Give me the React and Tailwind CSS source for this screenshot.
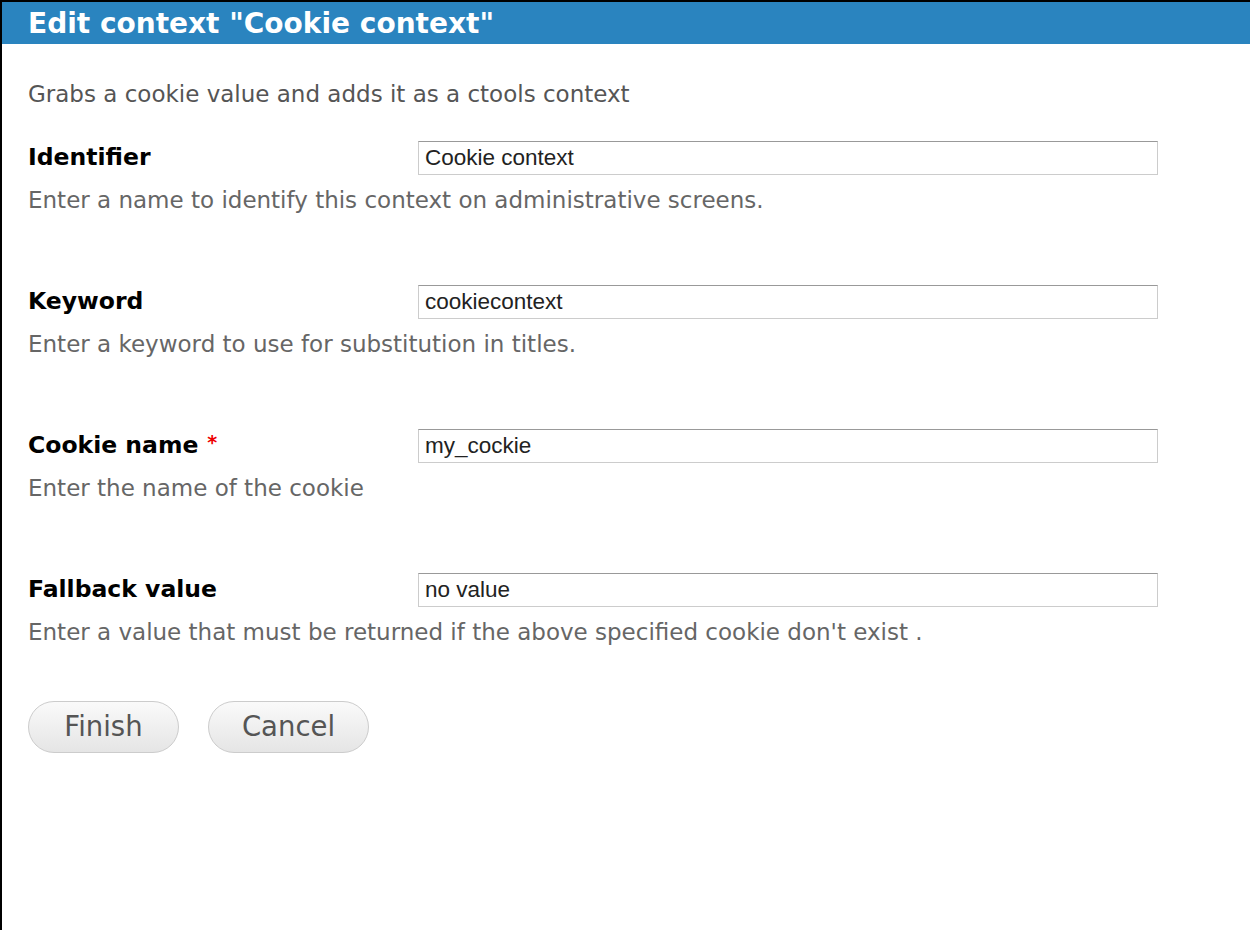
import { useState } from 'react';

const FIELDS = [
  { id: 'identifier', label: 'Identifier', value: 'Cookie context', help: 'Enter a name to identify this context on administrative screens.' },
  { id: 'keyword', label: 'Keyword', value: 'cookiecontext', help: 'Enter a keyword to use for substitution in titles.' },
  { id: 'cookie', label: 'Cookie name', value: 'my_cockie', help: 'Enter the name of the cookie', required: true },
  { id: 'fallback', label: 'Fallback value', value: 'no value', help: "Enter a value that must be returned if the above specified cookie don't exist ." },
];

export default function App() {
  const [values, setValues] = useState(() => {
    const v = {};
    FIELDS.forEach(f => { v[f.id] = f.value; });
    return v;
  });

  return (
    <div className="min-h-[930px] w-[1250px] bg-white border-t-2 border-l-2 border-black font-['DejaVu_Sans',sans-serif]">
      <div className="h-[42px] bg-[#2a84bf] pl-[26px] flex items-center">
        <h1 className="text-[28px] font-bold text-white leading-none mt-[2px]">Edit context "Cookie context"</h1>
      </div>

      <div className="pl-[26px] pt-[35px]">
        <p className="text-[23px] text-[#555] leading-[30px]">Grabs a cookie value and adds it as a ctools context</p>

        <div className="mt-[32px]">
          {FIELDS.map(f => (
            <div key={f.id} className="h-[144px]">
              <div className="flex items-center h-[34px]">
                <label className="w-[390px] text-[23.5px] font-bold text-black">
                  {f.label}
                  {f.required && <span className="text-[#e00] ml-[9px] text-[19px] align-top">*</span>}
                </label>
                <input
                  type="text"
                  value={values[f.id]}
                  onChange={e => setValues(prev => ({ ...prev, [f.id]: e.target.value }))}
                  className="w-[740px] h-[34px] border border-[#ccc] border-t-[#999] px-[6px] text-[22.5px] text-[#222] font-['Liberation_Sans',sans-serif] outline-none"
                />
              </div>
              <p className="mt-[10px] text-[23px] text-[#666] leading-[30px]">{f.help}</p>
            </div>
          ))}
        </div>

        <div className="flex gap-[29px] mt-[-16px]">
          <button className="w-[151px] h-[52px] rounded-full border border-[#ccc] bg-gradient-to-b from-[#fafafa] to-[#e5e5e5] text-[27.5px] text-[#555]">Finish</button>
          <button className="w-[161px] h-[52px] rounded-full border border-[#ccc] bg-gradient-to-b from-[#fafafa] to-[#e5e5e5] text-[27.5px] text-[#555]">Cancel</button>
        </div>
      </div>
    </div>
  );
}
